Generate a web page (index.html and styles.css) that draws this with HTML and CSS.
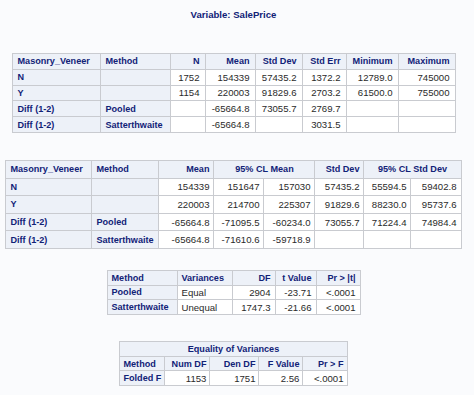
FILE: index.html
```html
<!DOCTYPE html>
<html>
<head>
<meta charset="utf-8">
<link rel="stylesheet" href="styles.css">
</head>
<body>
<div class="page">
  <div class="title">Variable: SalePrice</div>

  <table class="tbl t1">
    <colgroup>
      <col style="width:88px"><col style="width:70px"><col style="width:35px"><col style="width:50px"><col style="width:47px"><col style="width:44px"><col style="width:52px"><col style="width:57px">
    </colgroup>
    <tr><th class="l">Masonry_Veneer</th><th class="l">Method</th><th>N</th><th>Mean</th><th>Std Dev</th><th>Std Err</th><th>Minimum</th><th>Maximum</th></tr>
    <tr><th class="l">N</th><th class="l"></th><td>1752</td><td>154339</td><td>57435.2</td><td>1372.2</td><td>12789.0</td><td>745000</td></tr>
    <tr><th class="l">Y</th><th class="l"></th><td>1154</td><td>220003</td><td>91829.6</td><td>2703.2</td><td>61500.0</td><td>755000</td></tr>
    <tr><th class="l">Diff (1-2)</th><th class="l">Pooled</th><td></td><td>-65664.8</td><td>73055.7</td><td>2769.7</td><td></td><td></td></tr>
    <tr><th class="l">Diff (1-2)</th><th class="l">Satterthwaite</th><td></td><td>-65664.8</td><td></td><td>3031.5</td><td></td><td></td></tr>
  </table>

  <table class="tbl t2">
    <colgroup>
      <col style="width:86px"><col style="width:67px"><col style="width:55px"><col style="width:50px"><col style="width:51px"><col style="width:49px"><col style="width:47px"><col style="width:50px">
    </colgroup>
    <tr><th class="l">Masonry_Veneer</th><th class="l">Method</th><th>Mean</th><th colspan="2" class="c">95% CL Mean</th><th>Std Dev</th><th colspan="2" class="c">95% CL Std Dev</th></tr>
    <tr><th class="l">N</th><th class="l"></th><td>154339</td><td>151647</td><td>157030</td><td>57435.2</td><td>55594.5</td><td>59402.8</td></tr>
    <tr><th class="l">Y</th><th class="l"></th><td>220003</td><td>214700</td><td>225307</td><td>91829.6</td><td>88230.0</td><td>95737.6</td></tr>
    <tr><th class="l">Diff (1-2)</th><th class="l">Pooled</th><td>-65664.8</td><td>-71095.5</td><td>-60234.0</td><td>73055.7</td><td>71224.4</td><td>74984.4</td></tr>
    <tr><th class="l">Diff (1-2)</th><th class="l">Satterthwaite</th><td>-65664.8</td><td>-71610.6</td><td>-59718.9</td><td></td><td></td><td></td></tr>
  </table>

  <table class="tbl t3">
    <colgroup>
      <col style="width:70px"><col style="width:55px"><col style="width:43px"><col style="width:41px"><col style="width:44px">
    </colgroup>
    <tr><th class="l">Method</th><th class="l">Variances</th><th>DF</th><th>t Value</th><th>Pr &gt; |t|</th></tr>
    <tr><th class="l">Pooled</th><td class="l">Equal</td><td>2904</td><td>-23.71</td><td>&lt;.0001</td></tr>
    <tr><th class="l">Satterthwaite</th><td class="l">Unequal</td><td>1747.3</td><td>-21.66</td><td>&lt;.0001</td></tr>
  </table>

  <table class="tbl t4">
    <colgroup>
      <col style="width:45px"><col style="width:45px"><col style="width:49px"><col style="width:44px"><col style="width:44px">
    </colgroup>
    <tr><th colspan="5" class="c">Equality of Variances</th></tr>
    <tr><th class="l">Method</th><th>Num DF</th><th>Den DF</th><th>F Value</th><th>Pr &gt; F</th></tr>
    <tr><th class="l">Folded F</th><td>1153</td><td>1751</td><td>2.56</td><td>&lt;.0001</td></tr>
  </table>
</div>
</body>
</html>
```

FILE: styles.css
```css
html, body {
  margin: 0;
  padding: 0;
  background: #fafbfd;
}
body {
  font-family: "Liberation Sans", Arial, sans-serif;
  font-size: 9.6px;
  color: #222;
}
.page {
  width: 467px;
  display: flex;
  flex-direction: column;
  align-items: center;
}
.title {
  margin-top: 9px;
  height: 12px;
  line-height: 12px;
  font-weight: bold;
  color: #112277;
  font-size: 9.6px;
}
.tbl {
  border-collapse: collapse;
  table-layout: fixed;
  background: #fff;
}
.tbl th, .tbl td {
  border: 1px solid #c9cbd0;
  padding: 0 4px;
  text-align: right;
  white-space: nowrap;
  overflow: hidden;
}
.tbl td {
  font-size: 9.6px;
  color: #2a2a2a;
}
.tbl th {
  background: #edf1f8;
  color: #112277;
  font-weight: bold;
  font-size: 9.1px;
}
.tbl .l { text-align: left; }
.tbl .c { text-align: center; }
.t1 { width: 443px; margin-top: 32px; }
.t1 th, .t1 td { padding: 0 5px; }
.t1 tr { height: 15.8px; }
.t2 { width: 455px; margin-top: 27px; }
.t2 tr { height: 17.6px; }
.t3 { width: 253px; margin-top: 21px; }
.t3 tr { height: 14.7px; }
.t4 { width: 227px; margin-top: 26px; }
.t4 th, .t4 td { padding: 0 3px; }
.t4 tr { height: 14.7px; }
```
